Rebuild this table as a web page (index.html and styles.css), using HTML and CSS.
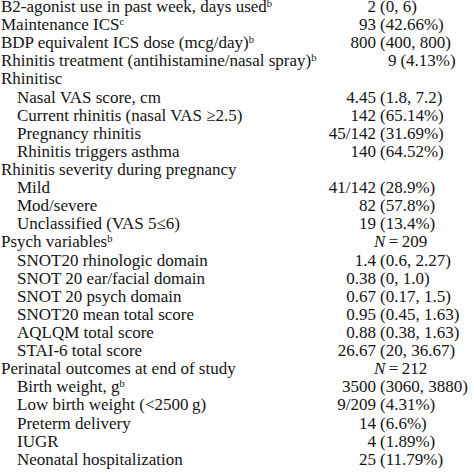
FILE: index.html
```html
<!DOCTYPE html>
<html>
<head>
<meta charset="utf-8">
<link rel="stylesheet" href="styles.css">
</head>
<body>
<div class="table">
  <div class="row"><span class="label">B2-agonist use in past week, days used<sup>b</sup></span><span class="num">2</span><span class="rest">(0, 6)</span></div>
  <div class="row"><span class="label">Maintenance ICS<sup>c</sup></span><span class="num">93</span><span class="rest">(42.66%)</span></div>
  <div class="row"><span class="label">BDP equivalent ICS dose (mcg/day)<sup>b</sup></span><span class="num">800</span><span class="rest">(400, 800)</span></div>
  <div class="row"><span class="label">Rhinitis treatment (antihistamine/nasal spray)<sup>b</sup></span><span class="num">9</span><span class="rest">(4.13%)</span></div>
  <div class="row"><span class="label">Rhinitisc</span></div>
  <div class="row"><span class="label sub">Nasal VAS score, cm</span><span class="num">4.45</span><span class="rest">(1.8, 7.2)</span></div>
  <div class="row"><span class="label sub">Current rhinitis (nasal VAS ≥2.5)</span><span class="num">142</span><span class="rest">(65.14%)</span></div>
  <div class="row"><span class="label sub">Pregnancy rhinitis</span><span class="num">45/142</span><span class="rest">(31.69%)</span></div>
  <div class="row"><span class="label sub">Rhinitis triggers asthma</span><span class="num">140</span><span class="rest">(64.52%)</span></div>
  <div class="row"><span class="label">Rhinitis severity during pregnancy</span></div>
  <div class="row"><span class="label sub">Mild</span><span class="num">41/142</span><span class="rest">(28.9%)</span></div>
  <div class="row"><span class="label sub">Mod/severe</span><span class="num">82</span><span class="rest">(57.8%)</span></div>
  <div class="row"><span class="label sub">Unclassified (VAS 5≤6)</span><span class="num">19</span><span class="rest">(13.4%)</span></div>
  <div class="row"><span class="label">Psych variables<sup>b</sup></span><span class="nval"><i>N</i>&#8201;=&#8201;209</span></div>
  <div class="row"><span class="label sub">SNOT20 rhinologic domain</span><span class="num">1.4</span><span class="rest">(0.6, 2.27)</span></div>
  <div class="row"><span class="label sub">SNOT 20 ear/facial domain</span><span class="num">0.38</span><span class="rest">(0, 1.0)</span></div>
  <div class="row"><span class="label sub">SNOT 20 psych domain</span><span class="num">0.67</span><span class="rest">(0.17, 1.5)</span></div>
  <div class="row"><span class="label sub">SNOT20 mean total score</span><span class="num">0.95</span><span class="rest">(0.45, 1.63)</span></div>
  <div class="row"><span class="label sub">AQLQM total score</span><span class="num">0.88</span><span class="rest">(0.38, 1.63)</span></div>
  <div class="row"><span class="label sub">STAI-6 total score</span><span class="num">26.67</span><span class="rest">(20, 36.67)</span></div>
  <div class="row"><span class="label">Perinatal outcomes at end of study</span><span class="nval"><i>N</i>&#8201;=&#8201;212</span></div>
  <div class="row"><span class="label sub">Birth weight, g<sup>b</sup></span><span class="num">3500</span><span class="rest">(3060, 3880)</span></div>
  <div class="row"><span class="label sub">Low birth weight (&lt;2500&#8201;g)</span><span class="num">9/209</span><span class="rest">(4.31%)</span></div>
  <div class="row"><span class="label sub">Preterm delivery</span><span class="num">14</span><span class="rest">(6.6%)</span></div>
  <div class="row"><span class="label sub">IUGR</span><span class="num">4</span><span class="rest">(1.89%)</span></div>
  <div class="row"><span class="label sub">Neonatal hospitalization</span><span class="num">25</span><span class="rest">(11.79%)</span></div>
</div>
</body>
</html>
```
FILE: styles.css
```css
html, body {
  margin: 0;
  padding: 0;
  background: #fff;
}
body {
  font-family: "Liberation Serif", "Times New Roman", serif;
  font-size: 17px;
  color: #141414;
}
.table {
  margin-top: -2px;
  padding-left: 1px;
}
.row {
  display: grid;
  grid-template-columns: 1fr 76px 94px;
  column-gap: 4px;
  height: 18.12px;
  line-height: 18.12px;
  white-space: nowrap;
}
.label {
  grid-column: 1;
  overflow: visible;
}
.label.sub {
  padding-left: 16px;
}
.num {
  grid-column: 2;
  text-align: right;
}
.rest {
  grid-column: 3;
}
.nval {
  grid-column: 2 / 4;
  padding-left: 74px;
}
sup {
  font-size: 10.5px;
  line-height: 0;
  vertical-align: 5px;
}
```
